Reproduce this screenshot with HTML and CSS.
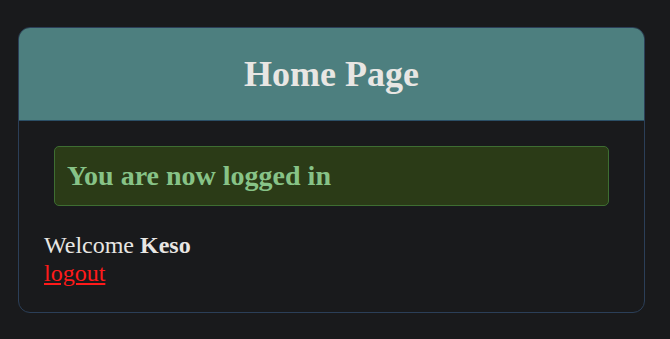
FILE: index.html
```html
<!DOCTYPE html>
<html lang="en">
<head>
    <meta charset="UTF-8">
    <meta name="viewport" content="width=device-width, initial-scale=1.0">
    <title>Home Page</title>
    <link rel="stylesheet" href="styles.css">
</head>
<body>
    <div class="card">
        <div class="card-header">
            <h1>Home Page</h1>
        </div>
        <div class="card-body">
            <div class="alert">
                <h3>You are now logged in</h3>
            </div>
            <p class="welcome">Welcome <strong>Keso</strong></p>
            <a href="#" class="logout">logout</a>
        </div>
    </div>
</body>
</html>
```

FILE: styles.css
```css
body {
    font-family: "Liberation Serif", "Times New Roman", serif;
    margin: 0;
    padding: 27px 25px 20px 18px;
    background-color: #191a1c;
    color: #e8e6e3;
}

.card {
    border: 1px solid #2b3f58;
    border-radius: 12px;
    overflow: hidden;
}

.card-header {
    background-color: #4d7f7f;
    border-bottom: 1px solid #2b4f66;
    padding: 26px 20px 25px;
    text-align: center;
}

.card-header h1 {
    margin: 0;
    font-size: 36px;
    font-weight: bold;
    line-height: 41px;
    color: #e8e6e3;
}

.card-body {
    padding: 25px 25px 25px;
}

.alert {
    margin: 0 10px 25px;
    padding: 13px 12px 13px;
    background-color: #2b3b17;
    border: 1px solid #3e6e32;
    border-radius: 5px;
}

.alert h3 {
    margin: 0;
    font-size: 28px;
    line-height: 32px;
    color: #87c387;
}

.welcome {
    margin: 0;
    font-size: 24px;
    line-height: 28px;
}

.logout {
    display: inline-block;
    font-size: 24px;
    line-height: 28px;
    color: #ff1a1a;
}
```
